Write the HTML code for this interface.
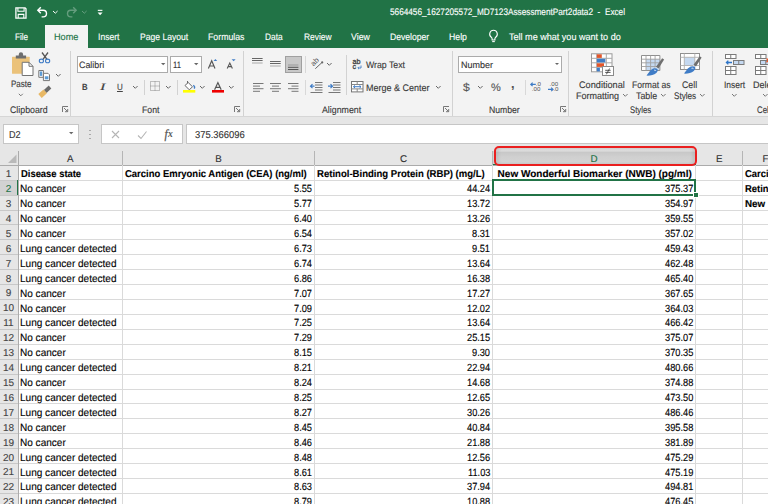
<!DOCTYPE html><html><head><meta charset="utf-8"><style>
html,body{margin:0;padding:0;}
body{width:768px;height:504px;overflow:hidden;position:relative;background:#fff;font-family:"Liberation Sans",sans-serif;}
.t{position:absolute;white-space:nowrap;transform-origin:0 0;display:block;-webkit-text-stroke:0.12px currentColor;text-rendering:geometricPrecision;}
.r{position:absolute;}
.s{position:absolute;overflow:visible;}
</style></head><body>
<div class="r" style="left:0px;top:0px;width:768px;height:47.5px;background:#217346;"></div>
<svg class="s" style="left:14px;top:6px" width="14" height="13" viewBox="0 0 14 13"><path d="M1.9 1.9h9.2l.9.9v9.3h-10.1z" fill="none" stroke="#fff" stroke-width="1.3"/><path d="M3.9 1.9v3.3h6.2v-3.3" fill="none" stroke="#fff" stroke-width="1.1"/><path d="M4.2 12v-3.6h5.6v3.6" fill="none" stroke="#fff" stroke-width="1.1"/></svg>
<svg class="s" style="left:35px;top:5px" width="15" height="14" viewBox="0 0 15 14"><path d="M3 5.3h5.2a3.3 3.3 0 0 1 0 6.6h-1.6" fill="none" stroke="#fff" stroke-width="1.4"/><path d="M5.8 2.3l-3 3 3 3" fill="none" stroke="#fff" stroke-width="1.4"/></svg>
<svg class="s" style="left:52px;top:10px" width="7" height="5" viewBox="0 0 7 5"><path d="M1 1l2.3 2.2 2.3-2.2" fill="none" stroke="#fff" stroke-width="1"/></svg>
<svg class="s" style="opacity:.3;left:64px;top:5px" width="15" height="14" viewBox="0 0 15 14"><path d="M12 5.3h-5.2a3.3 3.3 0 0 0 0 6.6h1.6" fill="none" stroke="#fff" stroke-width="1.4"/><path d="M9.2 2.3l3 3-3 3" fill="none" stroke="#fff" stroke-width="1.4"/></svg>
<svg class="s" style="opacity:.3;left:81px;top:10px" width="7" height="5" viewBox="0 0 7 5"><path d="M1 1l2.3 2.2 2.3-2.2" fill="none" stroke="#fff" stroke-width="1"/></svg>
<svg class="s" style="left:96px;top:8px" width="8" height="9" viewBox="0 0 8 9"><rect x="1.8" y="1.8" width="4.6" height="1.1" fill="#fff"/><path d="M1.6 4.4h5l-2.5 2.8z" fill="#fff"/></svg>
<span class="t" style="left:389.50px;top:8.00px;font-size:9.5px;line-height:9.5px;color:#fff;transform:scaleX(0.8657);">5664456_1627205572_MD7123AssessmentPart2data2&nbsp; -&nbsp; Excel</span>
<div class="r" style="left:44.6px;top:25px;width:43.3px;height:23px;background:#f3f3f3;"></div>
<span class="t" style="left:14.60px;top:33.00px;font-size:9.5px;line-height:9.5px;color:#fff;transform:scaleX(0.8558);">File</span>
<span class="t" style="left:53.70px;top:33.00px;font-size:9.5px;line-height:9.5px;color:#217346;transform:scaleX(0.9629);">Home</span>
<span class="t" style="left:98.30px;top:33.00px;font-size:9.5px;line-height:9.5px;color:#fff;transform:scaleX(0.9049);">Insert</span>
<span class="t" style="left:140.00px;top:33.00px;font-size:9.5px;line-height:9.5px;color:#fff;transform:scaleX(0.9035);">Page Layout</span>
<span class="t" style="left:208.30px;top:33.00px;font-size:9.5px;line-height:9.5px;color:#fff;transform:scaleX(0.9219);">Formulas</span>
<span class="t" style="left:265.40px;top:33.00px;font-size:9.5px;line-height:9.5px;color:#fff;transform:scaleX(0.8771);">Data</span>
<span class="t" style="left:303.50px;top:33.00px;font-size:9.5px;line-height:9.5px;color:#fff;transform:scaleX(0.8861);">Review</span>
<span class="t" style="left:350.70px;top:33.00px;font-size:9.5px;line-height:9.5px;color:#fff;transform:scaleX(0.9256);">View</span>
<span class="t" style="left:389.70px;top:33.00px;font-size:9.5px;line-height:9.5px;color:#fff;transform:scaleX(0.9030);">Developer</span>
<span class="t" style="left:449.30px;top:33.00px;font-size:9.5px;line-height:9.5px;color:#fff;transform:scaleX(0.9162);">Help</span>
<svg class="s" style="left:488px;top:29px" width="11" height="15" viewBox="0 0 11 15"><path d="M5.5 1.3a3.8 3.8 0 0 0-2.2 6.9c.5.4.8 1 .8 1.6v1.2h2.8v-1.2c0-.6.3-1.2.8-1.6a3.8 3.8 0 0 0-2.2-6.9z" fill="none" stroke="#fff" stroke-width="1.1"/><path d="M4.2 12.6h2.6" stroke="#fff" stroke-width="1.1"/></svg>
<span class="t" style="left:509.30px;top:33.00px;font-size:9.5px;line-height:9.5px;color:#fff;transform:scaleX(0.9528);">Tell me what you want to do</span>
<div class="r" style="left:0px;top:47.5px;width:768px;height:68.8px;background:#f3f3f3;"></div>
<div class="r" style="left:0px;top:116px;width:768px;height:1px;background:#d6d6d6;"></div>
<div class="r" style="left:69.6px;top:50.5px;width:1px;height:65px;background:#d2d2d2;"></div>
<div class="r" style="left:243.1px;top:50.5px;width:1px;height:65px;background:#d2d2d2;"></div>
<div class="r" style="left:451.5px;top:50.5px;width:1px;height:65px;background:#d2d2d2;"></div>
<div class="r" style="left:568.0px;top:50.5px;width:1px;height:65px;background:#d2d2d2;"></div>
<div class="r" style="left:712.2px;top:50.5px;width:1px;height:65px;background:#d2d2d2;"></div>
<span class="t" style="left:9.70px;top:106.00px;font-size:9.5px;line-height:9.5px;color:#383838;transform:scaleX(0.9247);">Clipboard</span>
<span class="t" style="left:141.60px;top:106.00px;font-size:9.5px;line-height:9.5px;color:#383838;transform:scaleX(0.9153);">Font</span>
<span class="t" style="left:322.00px;top:106.00px;font-size:9.5px;line-height:9.5px;color:#383838;transform:scaleX(0.9256);">Alignment</span>
<span class="t" style="left:488.60px;top:106.00px;font-size:9.5px;line-height:9.5px;color:#383838;transform:scaleX(0.9086);">Number</span>
<span class="t" style="left:629.80px;top:106.00px;font-size:9.5px;line-height:9.5px;color:#383838;transform:scaleX(0.8156);">Styles</span>
<span class="t" style="left:756.60px;top:106.00px;font-size:9.5px;line-height:9.5px;color:#383838;transform:scaleX(0.8288);">Cells</span>
<svg class="s" style="left:62.3px;top:106px" width="7" height="7" viewBox="0 0 7 7"><path d="M.5 .5h5.5M.5 .5v5.5" stroke="#777" stroke-width="1" fill="none"/><path d="M2 2l3.7 3.7M5.7 3v2.7H3" stroke="#777" stroke-width="1" fill="none"/></svg>
<svg class="s" style="left:234.3px;top:106px" width="7" height="7" viewBox="0 0 7 7"><path d="M.5 .5h5.5M.5 .5v5.5" stroke="#777" stroke-width="1" fill="none"/><path d="M2 2l3.7 3.7M5.7 3v2.7H3" stroke="#777" stroke-width="1" fill="none"/></svg>
<svg class="s" style="left:443.3px;top:106px" width="7" height="7" viewBox="0 0 7 7"><path d="M.5 .5h5.5M.5 .5v5.5" stroke="#777" stroke-width="1" fill="none"/><path d="M2 2l3.7 3.7M5.7 3v2.7H3" stroke="#777" stroke-width="1" fill="none"/></svg>
<svg class="s" style="left:559.9px;top:106px" width="7" height="7" viewBox="0 0 7 7"><path d="M.5 .5h5.5M.5 .5v5.5" stroke="#777" stroke-width="1" fill="none"/><path d="M2 2l3.7 3.7M5.7 3v2.7H3" stroke="#777" stroke-width="1" fill="none"/></svg>
<svg class="s" style="left:10px;top:52px" width="26" height="25" viewBox="0 0 26 25"><rect x="2" y="4.8" width="17.7" height="17" rx="0.5" fill="#ebc27a"/><path d="M5.8 6.5h10.3v-3h-3v-1.2a2 2 0 0 0-4.3 0v1.2h-3z" fill="#6d6d6d"/><path d="M12.2 10.3h6.8l4 4v9.2h-10.8z" fill="#fff" stroke="#737373" stroke-width="1"/><path d="M19 10.3v4h4" fill="none" stroke="#737373" stroke-width="1"/></svg>
<span class="t" style="left:10.80px;top:80.00px;font-size:9.5px;line-height:9.5px;color:#383838;transform:scaleX(0.8439);">Paste</span>
<svg class="s" style="left:18px;top:93px" width="6" height="4" viewBox="0 0 6 4"><path d="M.8 .8l2 2 2-2" fill="none" stroke="#666" stroke-width=".9"/></svg>
<svg class="s" style="left:38px;top:51px" width="14" height="13" viewBox="0 0 14 13"><path d="M4 1.5l5.2 7.2M10 1.5l-5.2 7.2" stroke="#555" stroke-width="1.3" fill="none"/><ellipse cx="3.4" cy="9.9" rx="2.1" ry="1.8" fill="none" stroke="#3f7cc6" stroke-width="1.1"/><ellipse cx="9.6" cy="9.9" rx="2.1" ry="1.8" fill="none" stroke="#3f7cc6" stroke-width="1.1"/></svg>
<svg class="s" style="left:37px;top:69px" width="15" height="13" viewBox="0 0 15 13"><path d="M1.8 1.5h4.6v6.8h-4.6z" fill="#fff" stroke="#777" stroke-width="1"/><rect x="2.8" y="2.5" width="2.4" height="4.4" fill="#5b9bd5"/><path d="M6.4 4.3h4.6l1.5 1.5v5.8h-6.1z" fill="#fff" stroke="#777" stroke-width="1"/><rect x="7.8" y="7.3" width="3.6" height="3" fill="#5b9bd5"/></svg>
<svg class="s" style="left:55px;top:73px" width="7" height="5" viewBox="0 0 7 5"><path d="M1 1l2.3 2.3 2.3-2.3" fill="none" stroke="#666" stroke-width="1"/></svg>
<svg class="s" style="left:37px;top:84px" width="16" height="16" viewBox="0 0 16 16"><path d="M14.3 4.5L11.7 1.5 6.9 5.9 9.5 8.9z" fill="#6b6b6b"/><path d="M9.9 9.2L6.5 5.4 1.3 10.1 4.7 13.9z" fill="#e8b865"/></svg>
<div class="r" style="left:76.8px;top:56.2px;width:91.3px;height:16.6px;background:#fff;border:1px solid #ababab;box-sizing:border-box;"></div>
<span class="t" style="left:79.30px;top:61.00px;font-size:9.2px;line-height:9.2px;color:#333;transform:scaleX(0.9665);">Calibri</span>
<svg class="s" style="left:161px;top:63.3px" width="6" height="4" viewBox="0 0 6 4"><path d="M0 0h4.4l-2.2 2.2z" fill="#666"/></svg>
<div class="r" style="left:170.1px;top:56.2px;width:31.6px;height:16.6px;background:#fff;border:1px solid #ababab;box-sizing:border-box;"></div>
<span class="t" style="left:172.60px;top:61.00px;font-size:9.2px;line-height:9.2px;color:#333;transform:scaleX(0.8377);">11</span>
<svg class="s" style="left:194.2px;top:63.3px" width="6" height="4" viewBox="0 0 6 4"><path d="M0 0h4.4l-2.2 2.2z" fill="#666"/></svg>
<svg class="s" style="left:207px;top:58px" width="12" height="12" viewBox="0 0 12 12"><path d="M1.4 10.4l3.3-7.6 3.3 7.6M2.6 8h4.2" fill="none" stroke="#555" stroke-width="1.15"/><path d="M6.6 3l1.8-2 1.8 2z" fill="#3f7cc6"/></svg>
<svg class="s" style="left:226px;top:58px" width="12" height="12" viewBox="0 0 12 12"><path d="M1.2 10.4l2.6-5.4 2.6 5.4M2.1 8.6h3.4" fill="none" stroke="#555" stroke-width="1.1"/><path d="M5.6 1.2h4l-2 2z" fill="#3f7cc6"/></svg>
<span class="t" style="left:81.50px;top:83.00px;font-size:9px;line-height:9px;color:#444;font-weight:700;transform:scaleX(0.8616);">B</span>
<span class="t" style="font-family:'Liberation Serif',serif;left:99.50px;top:83.00px;font-size:10px;line-height:10px;color:#444;font-style:italic;transform:scaleX(1.6516);">I</span>
<span class="t" style="left:117.40px;top:83.00px;font-size:9px;line-height:9px;color:#444;transform:scaleX(0.8924);text-decoration:underline;">U</span>
<svg class="s" style="left:131.5px;top:85px" width="7" height="5" viewBox="0 0 7 5"><path d="M1 1l2.3 2.3 2.3-2.3" fill="none" stroke="#666" stroke-width="1"/></svg>
<svg class="s" style="left:164.8px;top:85px" width="7" height="5" viewBox="0 0 7 5"><path d="M1 1l2.3 2.3 2.3-2.3" fill="none" stroke="#666" stroke-width="1"/></svg>
<svg class="s" style="left:199.4px;top:85px" width="7" height="5" viewBox="0 0 7 5"><path d="M1 1l2.3 2.3 2.3-2.3" fill="none" stroke="#666" stroke-width="1"/></svg>
<svg class="s" style="left:228.4px;top:85px" width="7" height="5" viewBox="0 0 7 5"><path d="M1 1l2.3 2.3 2.3-2.3" fill="none" stroke="#666" stroke-width="1"/></svg>
<div class="r" style="left:143.5px;top:79.5px;width:1px;height:15px;background:#d2d2d2;"></div>
<div class="r" style="left:177.3px;top:79.5px;width:1px;height:15px;background:#d2d2d2;"></div>
<svg class="s" style="left:149px;top:80px" width="12" height="12" viewBox="0 0 12 12"><rect x="1.5" y="1.5" width="9" height="9" fill="none" stroke="#888" stroke-width="1" stroke-dasharray="1 1"/><path d="M6 1.5v9M1.5 6h9" stroke="#888" stroke-width="1" stroke-dasharray="1 1"/></svg>
<svg class="s" style="left:183px;top:79px" width="14" height="15" viewBox="0 0 14 15"><path d="M4.5 2v3.5" stroke="#666" stroke-width="1"/><path d="M2 6.5l3.2-3 4.3 4.3-3.2 3z" fill="#fff" stroke="#666" stroke-width="1"/><path d="M10.3 6.2c1.2.8 1.6 2.3.9 3.4" fill="none" stroke="#3f7cc6" stroke-width="1.3"/><rect x="0" y="11" width="12.3" height="2.6" fill="#ffff00"/></svg>
<svg class="s" style="left:211px;top:79px" width="14" height="15" viewBox="0 0 14 15"><path d="M3.6 10.8l3.3-7.2 3.3 7.2M4.8 8.3h4.2" fill="none" stroke="#555" stroke-width="1.2"/><rect x="1" y="11" width="12" height="2.6" fill="#e00"/></svg>
<svg class="s" style="left:252.4px;top:57px" width="11" height="8" viewBox="0 0 11 8"><rect x="0" y="1" width="10.6" height="1" fill="#666"/><rect x="0" y="3" width="10.6" height="1" fill="#666"/><rect x="0" y="5.5" width="10.6" height="1" fill="#aaa"/></svg>
<svg class="s" style="left:270.1px;top:60px" width="11" height="8" viewBox="0 0 11 8"><rect x="0" y="1" width="10.7" height="1" fill="#666"/><rect x="0" y="3" width="10.7" height="1" fill="#666"/><rect x="0" y="5.5" width="10.7" height="1" fill="#aaa"/></svg>
<div class="r" style="left:285.1px;top:55.9px;width:16.8px;height:16.9px;background:#c8c8c8;border:1px solid #a0a0a0;box-sizing:border-box;"></div>
<svg class="s" style="left:288.2px;top:64px" width="11" height="7" viewBox="0 0 11 7"><rect x="0" y=".5" width="10.4" height="1" fill="#999"/><rect x="0" y="2.8" width="10.4" height="1" fill="#555"/><rect x="0" y="5" width="10.4" height="1" fill="#555"/></svg>
<svg class="s" style="left:252.5px;top:82.5px" width="11.5" height="11.4" viewBox="0 0 11.5 11.4"><rect x="0" y="0.0" width="10.5" height="1" fill="#777"/><rect x="0" y="2.6" width="7" height="1" fill="#777"/><rect x="0" y="5.2" width="10.5" height="1" fill="#777"/><rect x="0" y="7.800000000000001" width="7" height="1" fill="#777"/></svg>
<svg class="s" style="left:270px;top:82.5px" width="13.9" height="11.4" viewBox="0 0 13.9 11.4"><rect x="0" y="0.0" width="10.9" height="1" fill="#777"/><rect x="2" y="2.6" width="7" height="1" fill="#777"/><rect x="0" y="5.2" width="10.9" height="1" fill="#777"/><rect x="2" y="7.800000000000001" width="7" height="1" fill="#777"/></svg>
<svg class="s" style="left:288px;top:82.5px" width="15.0" height="11.4" viewBox="0 0 15.0 11.4"><rect x="0" y="0.0" width="10.5" height="1" fill="#777"/><rect x="3.5" y="2.6" width="7" height="1" fill="#777"/><rect x="0" y="5.2" width="10.5" height="1" fill="#777"/><rect x="3.5" y="7.800000000000001" width="7" height="1" fill="#777"/></svg>
<div class="r" style="left:305px;top:56px;width:1px;height:16.5px;background:#d8d8d8;"></div>
<div class="r" style="left:305px;top:79.5px;width:1px;height:15.7px;background:#d8d8d8;"></div>
<svg class="s" style="left:309px;top:55px" width="16" height="16" viewBox="0 0 16 16"><text x="5.5" y="9" font-size="7.5" font-family="Liberation Sans" fill="#555" text-anchor="middle" transform="rotate(-45 6 6.5)">ab</text><path d="M6.3 13.7l6.5-6" stroke="#666" stroke-width="1"/><circle cx="13.2" cy="7.4" r="1.1" fill="#666"/></svg>
<svg class="s" style="left:326px;top:62px" width="7" height="5" viewBox="0 0 7 5"><path d="M1 1l2.3 2.3 2.3-2.3" fill="none" stroke="#666" stroke-width="1"/></svg>
<svg class="s" style="left:310px;top:80px" width="13" height="13" viewBox="0 0 13 13"><path d="M5 2.5h7.5M5 5h7.5M5 7.5h7.5M5 10h7.5M.5 12.5h12" stroke="#777" stroke-width="1"/><path d="M4.5 6.2h-4M2.5 4.2l-2 2 2 2" stroke="#3f7cc6" stroke-width="1.2" fill="none"/></svg>
<svg class="s" style="left:328px;top:80px" width="13" height="13" viewBox="0 0 13 13"><path d="M5 2.5h7.5M5 5h7.5M5 7.5h7.5M5 10h7.5M.5 12.5h12" stroke="#777" stroke-width="1"/><path d="M0 6.2h4.5M2.5 4.2l2 2-2 2" stroke="#3f7cc6" stroke-width="1.2" fill="none"/></svg>
<div class="r" style="left:346px;top:54.8px;width:1px;height:40.4px;background:#d2d2d2;"></div>
<svg class="s" style="left:352px;top:57px" width="11" height="14" viewBox="0 0 11 14"><text x="0.5" y="6.6" font-size="7.2" font-family="Liberation Sans" fill="#444" stroke="#444" stroke-width=".3">ab</text><text x="0.5" y="12" font-size="7.2" font-family="Liberation Sans" fill="#444" stroke="#444" stroke-width=".3">c</text><path d="M9 8.5v2.5h-3M7 9.7l-1.2 1.3 1.2 1.2" stroke="#3f7cc6" stroke-width=".9" fill="none"/></svg>
<span class="t" style="left:365.80px;top:61.00px;font-size:9.5px;line-height:9.5px;color:#383838;transform:scaleX(0.9195);">Wrap Text</span>
<svg class="s" style="left:351px;top:81px" width="13" height="12" viewBox="0 0 13 12"><rect x=".5" y=".5" width="11.5" height="10.4" fill="#fff" stroke="#777" stroke-width="1"/><path d="M.5 3.5h11.5M.5 7.9h11.5M6.2 .5v3M6.2 7.9v3" stroke="#888" stroke-width="1"/><path d="M2.5 5.7h7.5M4 4.4l-1.5 1.3 1.5 1.3M8.5 4.4l1.5 1.3-1.5 1.3" stroke="#3f7cc6" stroke-width="1" fill="none"/></svg>
<span class="t" style="left:365.80px;top:84.00px;font-size:9.5px;line-height:9.5px;color:#383838;transform:scaleX(0.9470);">Merge &amp; Center</span>
<svg class="s" style="left:435px;top:85px" width="7" height="5" viewBox="0 0 7 5"><path d="M1 1l2.3 2.3 2.3-2.3" fill="none" stroke="#666" stroke-width="1"/></svg>
<div class="r" style="left:458.3px;top:56.3px;width:104.1px;height:16.4px;background:#fff;border:1px solid #ababab;box-sizing:border-box;"></div>
<span class="t" style="left:460.90px;top:61.00px;font-size:9.2px;line-height:9.2px;color:#333;transform:scaleX(0.9780);">Number</span>
<svg class="s" style="left:555px;top:63px" width="6" height="4" viewBox="0 0 6 4"><path d="M0 0h4l-2 2z" fill="#666"/></svg>
<span class="t" style="left:463.20px;top:83.00px;font-size:11px;line-height:11px;color:#555;transform:scaleX(1.1115);">$</span>
<svg class="s" style="left:477px;top:85px" width="7" height="5" viewBox="0 0 7 5"><path d="M1 1l2.3 2.3 2.3-2.3" fill="none" stroke="#666" stroke-width="1"/></svg>
<span class="t" style="left:490.90px;top:83.00px;font-size:11px;line-height:11px;color:#555;">%</span>
<span class="t" style="left:511.05px;top:77.00px;font-size:13px;line-height:13px;color:#555;font-weight:700;transform:scaleX(0.9691);">,</span>
<div class="r" style="left:524.7px;top:80.2px;width:1px;height:14.7px;background:#d8d8d8;"></div>
<svg class="s" style="left:529px;top:80px" width="14" height="14" viewBox="0 0 14 14"><g font-family="Liberation Sans" font-size="6.2" fill="#555"><text x="6.8" y="6.2">.0</text><text x="2.8" y="11.2">.00</text></g><path d="M6.8 4.4h-5M3.6 2.6l-1.8 1.8 1.8 1.8" stroke="#3f7cc6" stroke-width="1.2" fill="none"/></svg>
<svg class="s" style="left:547px;top:80px" width="14" height="14" viewBox="0 0 14 14"><g font-family="Liberation Sans" font-size="6.2" fill="#555"><text x="2.6" y="6.2">.00</text><text x="6.4" y="11.2">.0</text></g><path d="M1 9.4h5M4.2 7.6l1.8 1.8-1.8 1.8" stroke="#3f7cc6" stroke-width="1.2" fill="none"/></svg>
<svg class="s" style="left:590px;top:52px" width="26" height="26" viewBox="0 0 26 26"><rect x="1.5" y="1.8" width="20.5" height="18" fill="#fff" stroke="#9a9a9a" stroke-width="1"/><path d="M1.5 6.3h20.5M1.5 10.8h20.5M1.5 15.3h20.5M6.8 1.8v18M16.3 1.8v18" stroke="#a8a8a8" stroke-width="1"/><rect x="6.8" y="2.3" width="5" height="3.6" fill="#e2562b"/><rect x="6.8" y="6.8" width="8.6" height="3.6" fill="#3f7cc6"/><rect x="6.8" y="11.3" width="7.2" height="3.6" fill="#e2562b"/><rect x="6.8" y="15.8" width="3.1" height="3.6" fill="#3f7cc6"/><rect x="12.5" y="14.5" width="11" height="9" fill="#fff" stroke="#8a8a8a" stroke-width="1"/><path d="M15.2 18.3h5.4M15.2 20.4h5.4M16.4 22.3l3.2-5.8" stroke="#444" stroke-width=".9" fill="none"/></svg>
<span class="t" style="left:578.70px;top:81.00px;font-size:9.5px;line-height:9.5px;color:#383838;transform:scaleX(0.9635);">Conditional</span>
<span class="t" style="left:576.10px;top:92.00px;font-size:9.5px;line-height:9.5px;color:#383838;transform:scaleX(0.9493);">Formatting</span>
<svg class="s" style="left:622px;top:93.3px" width="7" height="5" viewBox="0 0 7 5"><path d="M1 1l2.3 2.3 2.3-2.3" fill="none" stroke="#777" stroke-width="1"/></svg>
<svg class="s" style="left:640px;top:52px" width="26" height="26" viewBox="0 0 26 26"><rect x="1.5" y="3.5" width="18.4" height="15" fill="#fff"/><rect x="6" y="7.2" width="13.9" height="11.3" fill="#c5d9f1"/><path d="M1.5 3.5h18.4v15h-18.4z" fill="none" stroke="#8f8f8f" stroke-width="1"/><path d="M1.5 7.2h18.4M1.5 10.8h18.4M1.5 14.5h18.4M6 3.5v15M10.6 3.5v15M15.1 3.5v15" stroke="#a0a0a0" stroke-width=".9"/><g transform="translate(0 0)"><path d="M22.2 6.2l1.9 1.4-5.6 9-2.5-1.8z" fill="#6f6f6f"/><path d="M15.7 15.2l2.6 1.9-.6 1-2.6-1.9z" fill="#fff"/><path d="M15 16.2c-2.4.2-4.6 1.6-5.8 3.8l-2.7 3.6c3.6.2 7.3-.6 9.8-2.6 1.6-1.3 1.9-3.2.9-4.4z" fill="#3f7cc6"/><path d="M14 18.3c.9-.3 1.8 0 2 .7" stroke="#fff" stroke-width=".8" fill="none"/></g></svg>
<span class="t" style="left:631.60px;top:81.00px;font-size:9.5px;line-height:9.5px;color:#383838;transform:scaleX(0.9027);">Format as</span>
<span class="t" style="left:636.40px;top:92.00px;font-size:9.5px;line-height:9.5px;color:#383838;transform:scaleX(0.9291);">Table</span>
<svg class="s" style="left:660px;top:93.3px" width="7" height="5" viewBox="0 0 7 5"><path d="M1 1l2.3 2.3 2.3-2.3" fill="none" stroke="#777" stroke-width="1"/></svg>
<svg class="s" style="left:679px;top:51px" width="26" height="26" viewBox="0 0 26 26"><rect x="1.5" y="2.5" width="19" height="16" fill="#fff" stroke="#8f8f8f" stroke-width="1"/><rect x="5.3" y="6.3" width="10.5" height="8.2" fill="#c5d9f1"/><path d="M1.5 6.3h19M1.5 14.5h19M5.3 2.5v16M15.8 2.5v16" stroke="#b0b0b0" stroke-width=".9"/><g transform="translate(-1.5 -1)"><path d="M22.2 6.2l1.9 1.4-5.6 9-2.5-1.8z" fill="#6f6f6f"/><path d="M15.7 15.2l2.6 1.9-.6 1-2.6-1.9z" fill="#fff"/><path d="M15 16.2c-2.4.2-4.6 1.6-5.8 3.8l-2.7 3.6c3.6.2 7.3-.6 9.8-2.6 1.6-1.3 1.9-3.2.9-4.4z" fill="#3f7cc6"/><path d="M14 18.3c.9-.3 1.8 0 2 .7" stroke="#fff" stroke-width=".8" fill="none"/></g></svg>
<span class="t" style="left:682.10px;top:81.00px;font-size:9.5px;line-height:9.5px;color:#383838;transform:scaleX(0.9227);">Cell</span>
<span class="t" style="left:674.20px;top:92.00px;font-size:9.5px;line-height:9.5px;color:#383838;transform:scaleX(0.8581);">Styles</span>
<svg class="s" style="left:699px;top:93.3px" width="7" height="5" viewBox="0 0 7 5"><path d="M1 1l2.3 2.3 2.3-2.3" fill="none" stroke="#777" stroke-width="1"/></svg>
<svg class="s" style="left:724px;top:53px" width="21" height="23" viewBox="0 0 21 23"><g fill="#fff" stroke="#7a7a7a" stroke-width="1"><rect x="1.5" y="1.5" width="10.5" height="4"/><rect x="1.5" y="13.5" width="10.5" height="8"/></g><path d="M6.75 1.5v4M6.75 13.5v8M1.5 17.5h10.5" stroke="#7a7a7a" stroke-width="1"/><rect x="9.5" y="7.5" width="10.5" height="4" fill="#c5d9f1" stroke="#7a7a7a" stroke-width="1"/><path d="M14.75 7.5v4" stroke="#7a7a7a"/><path d="M8 9.5h-5.5M4.3 7.6l-1.9 1.9 1.9 1.9" stroke="#2e75c8" stroke-width="1.3" fill="none"/></svg>
<svg class="s" style="left:754px;top:53px" width="21" height="23" viewBox="0 0 21 23"><g fill="#fff" stroke="#7a7a7a" stroke-width="1"><rect x="1.5" y="1.5" width="10.5" height="4"/><rect x="1.5" y="13.5" width="10.5" height="8"/></g><path d="M6.75 1.5v4M6.75 13.5v8M1.5 17.5h10.5" stroke="#7a7a7a" stroke-width="1"/><rect x="6.5" y="7.5" width="10.5" height="4" fill="#c5d9f1" stroke="#7a7a7a" stroke-width="1"/><path d="M11.75 7.5v4" stroke="#7a7a7a"/><path d="M12.5 5.5l3.8 3.8M16.3 5.5l-3.8 3.8" stroke="#e2562b" stroke-width="1.4"/></svg>
<span class="t" style="left:723.60px;top:81.00px;font-size:9.5px;line-height:9.5px;color:#383838;transform:scaleX(0.8923);">Insert</span>
<svg class="s" style="left:731px;top:93.2px" width="7" height="5" viewBox="0 0 7 5"><path d="M1 1l2.3 2.3 2.3-2.3" fill="none" stroke="#777" stroke-width="1"/></svg>
<span class="t" style="left:753.20px;top:81.00px;font-size:9.5px;line-height:9.5px;color:#383838;transform:scaleX(0.9468);">Delete</span>
<svg class="s" style="left:762.4px;top:93px" width="7" height="5" viewBox="0 0 7 5"><path d="M1 1l2.3 2.3 2.3-2.3" fill="none" stroke="#777" stroke-width="1"/></svg>
<div class="r" style="left:0px;top:117px;width:768px;height:34.5px;background:#e6e6e6;"></div>
<div class="r" style="left:3.4px;top:124.4px;width:75.3px;height:19.4px;background:#fff;border:1px solid #c6c6c6;box-sizing:border-box;"></div>
<span class="t" style="left:8.70px;top:131.00px;font-size:10px;line-height:10px;color:#333;transform:scaleX(0.9074);">D2</span>
<svg class="s" style="left:69px;top:132px" width="6" height="4" viewBox="0 0 6 4"><path d="M0 0h4.4l-2.2 2.2z" fill="#666"/></svg>
<div class="r" style="left:89.3px;top:129.5px;width:1.5px;height:1.5px;background:#aaa;"></div>
<div class="r" style="left:89.3px;top:133.5px;width:1.5px;height:1.5px;background:#aaa;"></div>
<div class="r" style="left:89.3px;top:137.5px;width:1.5px;height:1.5px;background:#aaa;"></div>
<div class="r" style="left:101.1px;top:124.4px;width:81.6px;height:19.3px;background:#fff;border:1px solid #c6c6c6;box-sizing:border-box;"></div>
<svg class="s" style="left:111px;top:130px" width="9" height="9" viewBox="0 0 9 9"><path d="M1 1l7 7M8 1l-7 7" stroke="#b5b5b5" stroke-width="1.1"/></svg>
<svg class="s" style="left:137px;top:129.5px" width="10" height="10" viewBox="0 0 10 10"><path d="M1 5.5l3 3 5.5-7" stroke="#b5b5b5" stroke-width="1.1" fill="none"/></svg>
<svg class="s" style="left:163px;top:127px" width="14" height="14" viewBox="0 0 14 14"><text x="1.5" y="10.5" font-family="Liberation Serif" font-style="italic" font-size="11.5" fill="#555" stroke="#555" stroke-width=".25">f</text><text x="5" y="10.4" font-family="Liberation Serif" font-style="italic" font-weight="700" font-size="9.5" fill="#555">x</text></svg>
<div class="r" style="left:185.8px;top:124.3px;width:583px;height:19.5px;background:#fff;border:1px solid #c6c6c6;border-right:none;box-sizing:border-box;"></div>
<span class="t" style="left:194.60px;top:131.00px;font-size:10px;line-height:10px;color:#333;transform:scaleX(0.9426);">375.366096</span>
<div class="r" style="left:0px;top:151.2px;width:768px;height:14.100000000000023px;background:#e6e6e6;"></div>
<svg class="s" style="left:6px;top:153px" width="12" height="11" viewBox="0 0 12 11"><path d="M10.5 1.5v8.5h-8.5z" fill="#b9b9b9"/></svg>
<div class="r" style="left:492.6px;top:151.2px;width:203px;height:14.100000000000023px;background:#d2d2d2;"></div>
<div class="r" style="left:0px;top:165.3px;width:18.2px;height:338.7px;background:#e6e6e6;"></div>
<div class="r" style="left:0px;top:180.214px;width:18.2px;height:14.914px;background:#d2d2d2;"></div>
<div class="r" style="left:18.2px;top:165.3px;width:750px;height:338.7px;background:#fff;"></div>
<div class="r" style="left:18.2px;top:164.8px;width:750px;height:1px;background:#dadada;"></div>
<div class="r" style="left:0px;top:164.8px;width:18.2px;height:1px;background:#c8c8c8;"></div>
<div class="r" style="left:18.2px;top:179.714px;width:750px;height:1px;background:#dadada;"></div>
<div class="r" style="left:0px;top:179.714px;width:18.2px;height:1px;background:#c8c8c8;"></div>
<div class="r" style="left:18.2px;top:194.62800000000001px;width:750px;height:1px;background:#dadada;"></div>
<div class="r" style="left:0px;top:194.62800000000001px;width:18.2px;height:1px;background:#c8c8c8;"></div>
<div class="r" style="left:18.2px;top:209.542px;width:750px;height:1px;background:#dadada;"></div>
<div class="r" style="left:0px;top:209.542px;width:18.2px;height:1px;background:#c8c8c8;"></div>
<div class="r" style="left:18.2px;top:224.45600000000002px;width:750px;height:1px;background:#dadada;"></div>
<div class="r" style="left:0px;top:224.45600000000002px;width:18.2px;height:1px;background:#c8c8c8;"></div>
<div class="r" style="left:18.2px;top:239.37px;width:750px;height:1px;background:#dadada;"></div>
<div class="r" style="left:0px;top:239.37px;width:18.2px;height:1px;background:#c8c8c8;"></div>
<div class="r" style="left:18.2px;top:254.284px;width:750px;height:1px;background:#dadada;"></div>
<div class="r" style="left:0px;top:254.284px;width:18.2px;height:1px;background:#c8c8c8;"></div>
<div class="r" style="left:18.2px;top:269.198px;width:750px;height:1px;background:#dadada;"></div>
<div class="r" style="left:0px;top:269.198px;width:18.2px;height:1px;background:#c8c8c8;"></div>
<div class="r" style="left:18.2px;top:284.112px;width:750px;height:1px;background:#dadada;"></div>
<div class="r" style="left:0px;top:284.112px;width:18.2px;height:1px;background:#c8c8c8;"></div>
<div class="r" style="left:18.2px;top:299.026px;width:750px;height:1px;background:#dadada;"></div>
<div class="r" style="left:0px;top:299.026px;width:18.2px;height:1px;background:#c8c8c8;"></div>
<div class="r" style="left:18.2px;top:313.94px;width:750px;height:1px;background:#dadada;"></div>
<div class="r" style="left:0px;top:313.94px;width:18.2px;height:1px;background:#c8c8c8;"></div>
<div class="r" style="left:18.2px;top:328.85400000000004px;width:750px;height:1px;background:#dadada;"></div>
<div class="r" style="left:0px;top:328.85400000000004px;width:18.2px;height:1px;background:#c8c8c8;"></div>
<div class="r" style="left:18.2px;top:343.76800000000003px;width:750px;height:1px;background:#dadada;"></div>
<div class="r" style="left:0px;top:343.76800000000003px;width:18.2px;height:1px;background:#c8c8c8;"></div>
<div class="r" style="left:18.2px;top:358.682px;width:750px;height:1px;background:#dadada;"></div>
<div class="r" style="left:0px;top:358.682px;width:18.2px;height:1px;background:#c8c8c8;"></div>
<div class="r" style="left:18.2px;top:373.596px;width:750px;height:1px;background:#dadada;"></div>
<div class="r" style="left:0px;top:373.596px;width:18.2px;height:1px;background:#c8c8c8;"></div>
<div class="r" style="left:18.2px;top:388.51px;width:750px;height:1px;background:#dadada;"></div>
<div class="r" style="left:0px;top:388.51px;width:18.2px;height:1px;background:#c8c8c8;"></div>
<div class="r" style="left:18.2px;top:403.424px;width:750px;height:1px;background:#dadada;"></div>
<div class="r" style="left:0px;top:403.424px;width:18.2px;height:1px;background:#c8c8c8;"></div>
<div class="r" style="left:18.2px;top:418.33799999999997px;width:750px;height:1px;background:#dadada;"></div>
<div class="r" style="left:0px;top:418.33799999999997px;width:18.2px;height:1px;background:#c8c8c8;"></div>
<div class="r" style="left:18.2px;top:433.252px;width:750px;height:1px;background:#dadada;"></div>
<div class="r" style="left:0px;top:433.252px;width:18.2px;height:1px;background:#c8c8c8;"></div>
<div class="r" style="left:18.2px;top:448.166px;width:750px;height:1px;background:#dadada;"></div>
<div class="r" style="left:0px;top:448.166px;width:18.2px;height:1px;background:#c8c8c8;"></div>
<div class="r" style="left:18.2px;top:463.08px;width:750px;height:1px;background:#dadada;"></div>
<div class="r" style="left:0px;top:463.08px;width:18.2px;height:1px;background:#c8c8c8;"></div>
<div class="r" style="left:18.2px;top:477.994px;width:750px;height:1px;background:#dadada;"></div>
<div class="r" style="left:0px;top:477.994px;width:18.2px;height:1px;background:#c8c8c8;"></div>
<div class="r" style="left:18.2px;top:492.908px;width:750px;height:1px;background:#dadada;"></div>
<div class="r" style="left:0px;top:492.908px;width:18.2px;height:1px;background:#c8c8c8;"></div>
<div class="r" style="left:18.2px;top:507.822px;width:750px;height:1px;background:#dadada;"></div>
<div class="r" style="left:0px;top:507.822px;width:18.2px;height:1px;background:#c8c8c8;"></div>
<div class="r" style="left:0px;top:164.5px;width:768px;height:1.4px;background:#ababab;"></div>
<div class="r" style="left:121.9px;top:165.3px;width:1px;height:338.7px;background:#dadada;"></div>
<div class="r" style="left:121.9px;top:151.2px;width:1px;height:14.100000000000023px;background:#b5b5b5;"></div>
<div class="r" style="left:314.1px;top:165.3px;width:1px;height:338.7px;background:#dadada;"></div>
<div class="r" style="left:314.1px;top:151.2px;width:1px;height:14.100000000000023px;background:#b5b5b5;"></div>
<div class="r" style="left:492.1px;top:165.3px;width:1px;height:338.7px;background:#dadada;"></div>
<div class="r" style="left:492.1px;top:151.2px;width:1px;height:14.100000000000023px;background:#b5b5b5;"></div>
<div class="r" style="left:695.1px;top:165.3px;width:1px;height:338.7px;background:#dadada;"></div>
<div class="r" style="left:695.1px;top:151.2px;width:1px;height:14.100000000000023px;background:#b5b5b5;"></div>
<div class="r" style="left:742.4px;top:165.3px;width:1px;height:338.7px;background:#dadada;"></div>
<div class="r" style="left:742.4px;top:151.2px;width:1px;height:14.100000000000023px;background:#b5b5b5;"></div>
<div class="r" style="left:17.5px;top:151.2px;width:1.4px;height:352.8px;background:#ababab;"></div>
<span class="t" style="left:67.03px;top:155.00px;font-size:9.8px;line-height:9.8px;color:#333;">A</span>
<span class="t" style="left:215.23px;top:155.00px;font-size:9.8px;line-height:9.8px;color:#333;">B</span>
<span class="t" style="left:400.06px;top:155.00px;font-size:9.8px;line-height:9.8px;color:#333;">C</span>
<span class="t" style="left:715.98px;top:155.00px;font-size:9.8px;line-height:9.8px;color:#333;">E</span>
<span class="t" style="left:762.61px;top:155.00px;font-size:9.8px;line-height:9.8px;color:#333;">F</span>
<span class="t" style="left:5.72px;top:170.00px;font-size:10px;line-height:10px;color:#444;">1</span>
<span class="t" style="left:5.72px;top:185.00px;font-size:10px;line-height:10px;color:#217346;">2</span>
<span class="t" style="left:5.72px;top:200.00px;font-size:10px;line-height:10px;color:#444;">3</span>
<span class="t" style="left:5.72px;top:215.00px;font-size:10px;line-height:10px;color:#444;">4</span>
<span class="t" style="left:5.72px;top:230.00px;font-size:10px;line-height:10px;color:#444;">5</span>
<span class="t" style="left:5.72px;top:245.00px;font-size:10px;line-height:10px;color:#444;">6</span>
<span class="t" style="left:5.72px;top:260.00px;font-size:10px;line-height:10px;color:#444;">7</span>
<span class="t" style="left:5.72px;top:275.00px;font-size:10px;line-height:10px;color:#444;">8</span>
<span class="t" style="left:5.72px;top:289.00px;font-size:10px;line-height:10px;color:#444;">9</span>
<span class="t" style="left:2.94px;top:304.00px;font-size:10px;line-height:10px;color:#444;">10</span>
<span class="t" style="left:3.31px;top:319.00px;font-size:10px;line-height:10px;color:#444;">11</span>
<span class="t" style="left:2.94px;top:334.00px;font-size:10px;line-height:10px;color:#444;">12</span>
<span class="t" style="left:2.94px;top:349.00px;font-size:10px;line-height:10px;color:#444;">13</span>
<span class="t" style="left:2.94px;top:364.00px;font-size:10px;line-height:10px;color:#444;">14</span>
<span class="t" style="left:2.94px;top:379.00px;font-size:10px;line-height:10px;color:#444;">15</span>
<span class="t" style="left:2.94px;top:394.00px;font-size:10px;line-height:10px;color:#444;">16</span>
<span class="t" style="left:2.94px;top:409.00px;font-size:10px;line-height:10px;color:#444;">17</span>
<span class="t" style="left:2.94px;top:424.00px;font-size:10px;line-height:10px;color:#444;">18</span>
<span class="t" style="left:2.94px;top:439.00px;font-size:10px;line-height:10px;color:#444;">19</span>
<span class="t" style="left:2.94px;top:454.00px;font-size:10px;line-height:10px;color:#444;">20</span>
<span class="t" style="left:2.94px;top:468.00px;font-size:10px;line-height:10px;color:#444;">21</span>
<span class="t" style="left:2.94px;top:483.00px;font-size:10px;line-height:10px;color:#444;">22</span>
<span class="t" style="left:2.94px;top:498.00px;font-size:10px;line-height:10px;color:#444;">23</span>
<span class="t" style="left:20.50px;top:170.00px;font-size:10px;line-height:10px;color:#000;font-weight:700;transform:scaleX(0.9401);">Disease state</span>
<span class="t" style="left:124.70px;top:170.00px;font-size:10px;line-height:10px;color:#000;font-weight:700;transform:scaleX(0.9470);">Carcino Emryonic Antigen (CEA) (ng/ml)</span>
<span class="t" style="left:317.00px;top:170.00px;font-size:10px;line-height:10px;color:#000;font-weight:700;transform:scaleX(0.9559);">Retinol-Binding Protein (RBP) (mg/L)</span>
<span class="t" style="left:497.60px;top:170.00px;font-size:10px;line-height:10px;color:#000;font-weight:700;">New Wonderful Biomarker (NWB) (pg/ml)</span>
<span class="t" style="left:745.20px;top:170.00px;font-size:10px;line-height:10px;color:#000;font-weight:700;transform:scaleX(0.9401);">Carcino Emryonic</span>
<span class="t" style="left:745.20px;top:185.00px;font-size:10px;line-height:10px;color:#000;font-weight:700;transform:scaleX(0.9401);">Retinol-Binding</span>
<span class="t" style="left:745.20px;top:200.00px;font-size:10px;line-height:10px;color:#000;font-weight:700;transform:scaleX(0.9824);">New</span>
<span class="t" style="left:20.40px;top:185.00px;font-size:10.4px;line-height:10.4px;color:#000;transform:scaleX(0.9657);">No cancer</span>
<span class="t" style="left:294.20px;top:185.00px;font-size:10.4px;line-height:10.4px;color:#000;transform:scaleX(0.8894);">5.55</span>
<span class="t" style="left:467.05px;top:185.00px;font-size:10.4px;line-height:10.4px;color:#000;transform:scaleX(0.8894);">44.24</span>
<span class="t" style="left:664.91px;top:185.00px;font-size:10.4px;line-height:10.4px;color:#000;transform:scaleX(0.8894);">375.37</span>
<span class="t" style="left:20.40px;top:200.00px;font-size:10.4px;line-height:10.4px;color:#000;transform:scaleX(0.9657);">No cancer</span>
<span class="t" style="left:294.20px;top:200.00px;font-size:10.4px;line-height:10.4px;color:#000;transform:scaleX(0.8894);">5.77</span>
<span class="t" style="left:467.05px;top:200.00px;font-size:10.4px;line-height:10.4px;color:#000;transform:scaleX(0.8894);">13.72</span>
<span class="t" style="left:664.91px;top:200.00px;font-size:10.4px;line-height:10.4px;color:#000;transform:scaleX(0.8894);">354.97</span>
<span class="t" style="left:20.40px;top:215.00px;font-size:10.4px;line-height:10.4px;color:#000;transform:scaleX(0.9657);">No cancer</span>
<span class="t" style="left:294.20px;top:215.00px;font-size:10.4px;line-height:10.4px;color:#000;transform:scaleX(0.8894);">6.40</span>
<span class="t" style="left:467.05px;top:215.00px;font-size:10.4px;line-height:10.4px;color:#000;transform:scaleX(0.8894);">13.26</span>
<span class="t" style="left:664.91px;top:215.00px;font-size:10.4px;line-height:10.4px;color:#000;transform:scaleX(0.8894);">359.55</span>
<span class="t" style="left:20.40px;top:230.00px;font-size:10.4px;line-height:10.4px;color:#000;transform:scaleX(0.9657);">No cancer</span>
<span class="t" style="left:294.20px;top:230.00px;font-size:10.4px;line-height:10.4px;color:#000;transform:scaleX(0.8894);">6.54</span>
<span class="t" style="left:472.20px;top:230.00px;font-size:10.4px;line-height:10.4px;color:#000;transform:scaleX(0.8894);">8.31</span>
<span class="t" style="left:664.91px;top:230.00px;font-size:10.4px;line-height:10.4px;color:#000;transform:scaleX(0.8894);">357.02</span>
<span class="t" style="left:20.40px;top:245.00px;font-size:10.4px;line-height:10.4px;color:#000;transform:scaleX(0.9657);">Lung cancer detected</span>
<span class="t" style="left:294.20px;top:245.00px;font-size:10.4px;line-height:10.4px;color:#000;transform:scaleX(0.8894);">6.73</span>
<span class="t" style="left:472.20px;top:245.00px;font-size:10.4px;line-height:10.4px;color:#000;transform:scaleX(0.8894);">9.51</span>
<span class="t" style="left:664.91px;top:245.00px;font-size:10.4px;line-height:10.4px;color:#000;transform:scaleX(0.8894);">459.43</span>
<span class="t" style="left:20.40px;top:260.00px;font-size:10.4px;line-height:10.4px;color:#000;transform:scaleX(0.9657);">Lung cancer detected</span>
<span class="t" style="left:294.20px;top:260.00px;font-size:10.4px;line-height:10.4px;color:#000;transform:scaleX(0.8894);">6.74</span>
<span class="t" style="left:467.05px;top:260.00px;font-size:10.4px;line-height:10.4px;color:#000;transform:scaleX(0.8894);">13.64</span>
<span class="t" style="left:664.91px;top:260.00px;font-size:10.4px;line-height:10.4px;color:#000;transform:scaleX(0.8894);">462.48</span>
<span class="t" style="left:20.40px;top:275.00px;font-size:10.4px;line-height:10.4px;color:#000;transform:scaleX(0.9657);">Lung cancer detected</span>
<span class="t" style="left:294.20px;top:275.00px;font-size:10.4px;line-height:10.4px;color:#000;transform:scaleX(0.8894);">6.86</span>
<span class="t" style="left:467.05px;top:275.00px;font-size:10.4px;line-height:10.4px;color:#000;transform:scaleX(0.8894);">16.38</span>
<span class="t" style="left:664.91px;top:275.00px;font-size:10.4px;line-height:10.4px;color:#000;transform:scaleX(0.8894);">465.40</span>
<span class="t" style="left:20.40px;top:290.00px;font-size:10.4px;line-height:10.4px;color:#000;transform:scaleX(0.9657);">No cancer</span>
<span class="t" style="left:294.20px;top:290.00px;font-size:10.4px;line-height:10.4px;color:#000;transform:scaleX(0.8894);">7.07</span>
<span class="t" style="left:467.05px;top:290.00px;font-size:10.4px;line-height:10.4px;color:#000;transform:scaleX(0.8894);">17.27</span>
<span class="t" style="left:664.91px;top:290.00px;font-size:10.4px;line-height:10.4px;color:#000;transform:scaleX(0.8894);">367.65</span>
<span class="t" style="left:20.40px;top:305.00px;font-size:10.4px;line-height:10.4px;color:#000;transform:scaleX(0.9657);">No cancer</span>
<span class="t" style="left:294.20px;top:305.00px;font-size:10.4px;line-height:10.4px;color:#000;transform:scaleX(0.8894);">7.09</span>
<span class="t" style="left:467.05px;top:305.00px;font-size:10.4px;line-height:10.4px;color:#000;transform:scaleX(0.8894);">12.02</span>
<span class="t" style="left:664.91px;top:305.00px;font-size:10.4px;line-height:10.4px;color:#000;transform:scaleX(0.8894);">364.03</span>
<span class="t" style="left:20.40px;top:319.00px;font-size:10.4px;line-height:10.4px;color:#000;transform:scaleX(0.9657);">Lung cancer detected</span>
<span class="t" style="left:294.20px;top:319.00px;font-size:10.4px;line-height:10.4px;color:#000;transform:scaleX(0.8894);">7.25</span>
<span class="t" style="left:467.05px;top:319.00px;font-size:10.4px;line-height:10.4px;color:#000;transform:scaleX(0.8894);">13.64</span>
<span class="t" style="left:664.91px;top:319.00px;font-size:10.4px;line-height:10.4px;color:#000;transform:scaleX(0.8894);">466.42</span>
<span class="t" style="left:20.40px;top:334.00px;font-size:10.4px;line-height:10.4px;color:#000;transform:scaleX(0.9657);">No cancer</span>
<span class="t" style="left:294.20px;top:334.00px;font-size:10.4px;line-height:10.4px;color:#000;transform:scaleX(0.8894);">7.29</span>
<span class="t" style="left:467.05px;top:334.00px;font-size:10.4px;line-height:10.4px;color:#000;transform:scaleX(0.8894);">25.15</span>
<span class="t" style="left:664.91px;top:334.00px;font-size:10.4px;line-height:10.4px;color:#000;transform:scaleX(0.8894);">375.07</span>
<span class="t" style="left:20.40px;top:349.00px;font-size:10.4px;line-height:10.4px;color:#000;transform:scaleX(0.9657);">No cancer</span>
<span class="t" style="left:294.20px;top:349.00px;font-size:10.4px;line-height:10.4px;color:#000;transform:scaleX(0.8894);">8.15</span>
<span class="t" style="left:472.20px;top:349.00px;font-size:10.4px;line-height:10.4px;color:#000;transform:scaleX(0.8894);">9.30</span>
<span class="t" style="left:664.91px;top:349.00px;font-size:10.4px;line-height:10.4px;color:#000;transform:scaleX(0.8894);">370.35</span>
<span class="t" style="left:20.40px;top:364.00px;font-size:10.4px;line-height:10.4px;color:#000;transform:scaleX(0.9657);">Lung cancer detected</span>
<span class="t" style="left:294.20px;top:364.00px;font-size:10.4px;line-height:10.4px;color:#000;transform:scaleX(0.8894);">8.21</span>
<span class="t" style="left:467.05px;top:364.00px;font-size:10.4px;line-height:10.4px;color:#000;transform:scaleX(0.8894);">22.94</span>
<span class="t" style="left:664.91px;top:364.00px;font-size:10.4px;line-height:10.4px;color:#000;transform:scaleX(0.8894);">480.66</span>
<span class="t" style="left:20.40px;top:379.00px;font-size:10.4px;line-height:10.4px;color:#000;transform:scaleX(0.9657);">No cancer</span>
<span class="t" style="left:294.20px;top:379.00px;font-size:10.4px;line-height:10.4px;color:#000;transform:scaleX(0.8894);">8.24</span>
<span class="t" style="left:467.05px;top:379.00px;font-size:10.4px;line-height:10.4px;color:#000;transform:scaleX(0.8894);">14.68</span>
<span class="t" style="left:664.91px;top:379.00px;font-size:10.4px;line-height:10.4px;color:#000;transform:scaleX(0.8894);">374.88</span>
<span class="t" style="left:20.40px;top:394.00px;font-size:10.4px;line-height:10.4px;color:#000;transform:scaleX(0.9657);">Lung cancer detected</span>
<span class="t" style="left:294.20px;top:394.00px;font-size:10.4px;line-height:10.4px;color:#000;transform:scaleX(0.8894);">8.25</span>
<span class="t" style="left:467.05px;top:394.00px;font-size:10.4px;line-height:10.4px;color:#000;transform:scaleX(0.8894);">12.65</span>
<span class="t" style="left:664.91px;top:394.00px;font-size:10.4px;line-height:10.4px;color:#000;transform:scaleX(0.8894);">473.50</span>
<span class="t" style="left:20.40px;top:409.00px;font-size:10.4px;line-height:10.4px;color:#000;transform:scaleX(0.9657);">Lung cancer detected</span>
<span class="t" style="left:294.20px;top:409.00px;font-size:10.4px;line-height:10.4px;color:#000;transform:scaleX(0.8894);">8.27</span>
<span class="t" style="left:467.05px;top:409.00px;font-size:10.4px;line-height:10.4px;color:#000;transform:scaleX(0.8894);">30.26</span>
<span class="t" style="left:664.91px;top:409.00px;font-size:10.4px;line-height:10.4px;color:#000;transform:scaleX(0.8894);">486.46</span>
<span class="t" style="left:20.40px;top:424.00px;font-size:10.4px;line-height:10.4px;color:#000;transform:scaleX(0.9657);">No cancer</span>
<span class="t" style="left:294.20px;top:424.00px;font-size:10.4px;line-height:10.4px;color:#000;transform:scaleX(0.8894);">8.45</span>
<span class="t" style="left:467.05px;top:424.00px;font-size:10.4px;line-height:10.4px;color:#000;transform:scaleX(0.8894);">40.84</span>
<span class="t" style="left:664.91px;top:424.00px;font-size:10.4px;line-height:10.4px;color:#000;transform:scaleX(0.8894);">395.58</span>
<span class="t" style="left:20.40px;top:439.00px;font-size:10.4px;line-height:10.4px;color:#000;transform:scaleX(0.9657);">No cancer</span>
<span class="t" style="left:294.20px;top:439.00px;font-size:10.4px;line-height:10.4px;color:#000;transform:scaleX(0.8894);">8.46</span>
<span class="t" style="left:467.05px;top:439.00px;font-size:10.4px;line-height:10.4px;color:#000;transform:scaleX(0.8894);">21.88</span>
<span class="t" style="left:664.91px;top:439.00px;font-size:10.4px;line-height:10.4px;color:#000;transform:scaleX(0.8894);">381.89</span>
<span class="t" style="left:20.40px;top:454.00px;font-size:10.4px;line-height:10.4px;color:#000;transform:scaleX(0.9657);">Lung cancer detected</span>
<span class="t" style="left:294.20px;top:454.00px;font-size:10.4px;line-height:10.4px;color:#000;transform:scaleX(0.8894);">8.48</span>
<span class="t" style="left:467.05px;top:454.00px;font-size:10.4px;line-height:10.4px;color:#000;transform:scaleX(0.8894);">12.56</span>
<span class="t" style="left:664.91px;top:454.00px;font-size:10.4px;line-height:10.4px;color:#000;transform:scaleX(0.8894);">475.29</span>
<span class="t" style="left:20.40px;top:469.00px;font-size:10.4px;line-height:10.4px;color:#000;transform:scaleX(0.9657);">Lung cancer detected</span>
<span class="t" style="left:294.20px;top:469.00px;font-size:10.4px;line-height:10.4px;color:#000;transform:scaleX(0.8894);">8.61</span>
<span class="t" style="left:467.74px;top:469.00px;font-size:10.4px;line-height:10.4px;color:#000;transform:scaleX(0.8894);">11.03</span>
<span class="t" style="left:664.91px;top:469.00px;font-size:10.4px;line-height:10.4px;color:#000;transform:scaleX(0.8894);">475.19</span>
<span class="t" style="left:20.40px;top:483.00px;font-size:10.4px;line-height:10.4px;color:#000;transform:scaleX(0.9657);">Lung cancer detected</span>
<span class="t" style="left:294.20px;top:483.00px;font-size:10.4px;line-height:10.4px;color:#000;transform:scaleX(0.8894);">8.63</span>
<span class="t" style="left:467.05px;top:483.00px;font-size:10.4px;line-height:10.4px;color:#000;transform:scaleX(0.8894);">37.94</span>
<span class="t" style="left:664.91px;top:483.00px;font-size:10.4px;line-height:10.4px;color:#000;transform:scaleX(0.8894);">494.81</span>
<span class="t" style="left:20.40px;top:498.00px;font-size:10.4px;line-height:10.4px;color:#000;transform:scaleX(0.9657);">Lung cancer detected</span>
<span class="t" style="left:294.20px;top:498.00px;font-size:10.4px;line-height:10.4px;color:#000;transform:scaleX(0.8894);">8.79</span>
<span class="t" style="left:467.05px;top:498.00px;font-size:10.4px;line-height:10.4px;color:#000;transform:scaleX(0.8894);">10.88</span>
<span class="t" style="left:664.91px;top:498.00px;font-size:10.4px;line-height:10.4px;color:#000;transform:scaleX(0.8894);">476.45</span>
<div class="r" style="left:491.7px;top:179.314px;width:204.6px;height:16.4px;background:transparent;border:2px solid #217346;box-sizing:border-box;"></div>
<div class="r" style="left:694.2px;top:193.328px;width:3.4px;height:3.4px;background:#217346;outline:1px solid #fff;"></div>
<div class="r" style="left:492.6px;top:163.9px;width:203px;height:1.6px;background:#217346;"></div>
<div class="r" style="left:16.6px;top:180.214px;width:1.6px;height:14.914px;background:#217346;"></div>
<div class="r" style="left:494.3px;top:145.9px;width:202.5px;height:20.4px;background:linear-gradient(#dedede 0,#dadada 3px,#c8c8c8 4.5px,#d0d0d0 9px,#d4d4d4 100%);border:2px solid #ea1f1f;border-radius:5px;box-sizing:border-box;box-shadow:inset 3px 0 3px rgba(0,0,0,.07),inset -3px 0 3px rgba(0,0,0,.07);"></div>
<span class="t" style="left:590.56px;top:155.00px;font-size:9.8px;line-height:9.8px;color:#217346;">D</span>
</body></html>
